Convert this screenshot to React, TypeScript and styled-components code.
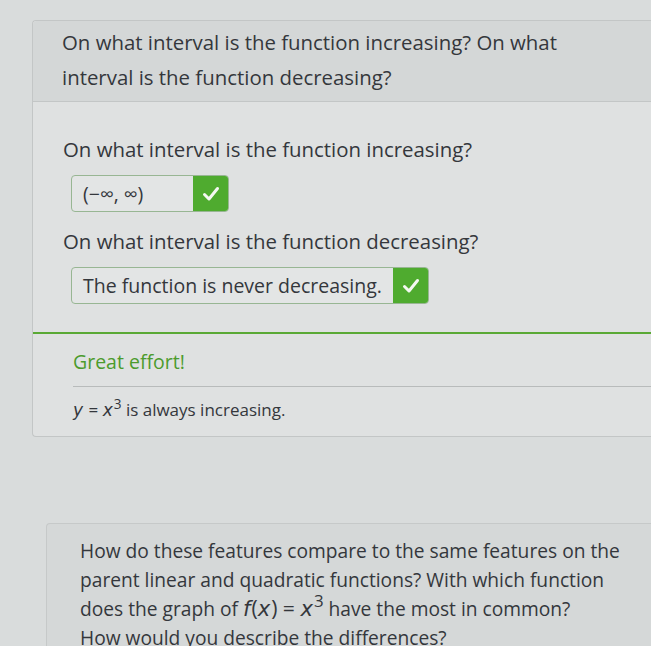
import React from 'react'
import styled, { createGlobalStyle } from 'styled-components'

const GlobalStyle = createGlobalStyle`
  html, body {
    margin: 0;
    padding: 0;
    background: #d9dcdc;
    font-family: 'Open Sans', 'Noto Sans', sans-serif;
    color: #34373c;
  }
`

const Page = styled.div`
  width: 651px;
  height: 646px;
  overflow: hidden;
  padding-top: 20px;
  box-sizing: border-box;
`

const Card = styled.div`
  margin-left: 32px;
  width: 680px;
  border: 1px solid #c3c6c6;
  border-right: none;
  border-radius: 4px 0 0 4px;
  background: #dfe1e1;
`

const Header = styled.div`
  background: #d4d7d7;
  border-bottom: 1px solid #c3c6c6;
  border-radius: 4px 0 0 0;
  padding: 4px 0 6px 29px;
  font-size: 20.4px;
  line-height: 35px;
`

const HeaderText = styled.div`
  width: 530px;
`

const Body = styled.div`
  padding: 32px 0 28px 30px;
`

const Question = styled.div<{ $gap?: number }>`
  font-size: 20.4px;
  line-height: 30px;
  margin-top: ${(p) => p.$gap ?? 0}px;
`

const AnswerBox = styled.div<{ $width: number }>`
  display: flex;
  width: ${(p) => p.$width}px;
  height: 37px;
  margin: 11px 0 0 8px;
  border: 1px solid #98b693;
  border-radius: 4px;
  overflow: hidden;
  background: #e3e5e5;
  box-sizing: border-box;
`

const AnswerText = styled.div`
  flex: 1;
  display: flex;
  align-items: center;
  padding-left: 11px;
  font-size: 19.5px;
  white-space: nowrap;
`

const CheckCell = styled.div`
  width: 35px;
  flex-shrink: 0;
  background: #4fab2f;
  display: flex;
  align-items: center;
  justify-content: center;
`

const Feedback = styled.div`
  border-top: 2px solid #5aa935;
  padding: 14px 58px 14px 40px;
`

const FeedbackTitle = styled.div`
  color: #4c9b2d;
  font-size: 19.5px;
  line-height: 28px;
`

const Divider = styled.hr`
  border: none;
  border-top: 1px solid #b8bbbb;
  margin: 10px 0 11px;
`

const Small = styled.div`
  font-size: 17px;
  line-height: 24px;
`

const Sup = styled.sup`
  font-size: 0.8em;
  line-height: 0;
  position: relative;
  top: -0.05em;
`

const MathExpr = styled.span<{ $scale?: number }>`
  font-size: ${(p) => p.$scale ?? 1}em;
  white-space: nowrap;
`

const MathVar = styled.i`
  font-family: 'DejaVu Sans', 'Open Sans', sans-serif;
  padding-right: 1px;
`

const Panel = styled.div`
  margin: 86px 0 0 46px;
  width: 640px;
  background: #d5d8d8;
  border: 1px solid #c6c9c9;
  border-right: none;
  border-radius: 4px 0 0 0;
  padding: 13px 0 0 33px;
  font-size: 19.2px;
  line-height: 28.5px;
  height: 200px;
`

const PanelText = styled.div`
  width: 552px;
`

const Check = () => (
  <svg width="18" height="16" viewBox="0 0 18 16">
    <path
      d="M2.5 8.5 L7 13 L15.5 2.5"
      fill="none"
      stroke="#f4f8f2"
      strokeWidth="3"
      strokeLinecap="round"
      strokeLinejoin="round"
    />
  </svg>
)

export default function App() {
  return (
    <>
      <GlobalStyle />
      <Page>
        <Card>
          <Header>
            <HeaderText>
              On what interval is the function increasing? On what interval is the function
              decreasing?
            </HeaderText>
          </Header>
          <Body>
            <Question>On what interval is the function increasing?</Question>
            <AnswerBox $width={158}>
              <AnswerText>(−∞, ∞)</AnswerText>
              <CheckCell>
                <Check />
              </CheckCell>
            </AnswerBox>
            <Question $gap={14}>On what interval is the function decreasing?</Question>
            <AnswerBox $width={358}>
              <AnswerText>The function is never decreasing.</AnswerText>
              <CheckCell>
                <Check />
              </CheckCell>
            </AnswerBox>
          </Body>
          <Feedback>
            <FeedbackTitle>Great effort!</FeedbackTitle>
            <Divider />
            <Small>
              <MathExpr>
                <MathVar>y</MathVar> = <MathVar>x</MathVar>
                <Sup>3</Sup>
              </MathExpr>{' '}
              is always increasing.
            </Small>
          </Feedback>
        </Card>
        <Panel>
          <PanelText>
            How do these features compare to the same features on the parent linear and
            quadratic functions? With which function does the graph of{' '}
            <MathExpr $scale={1.1}>
              <MathVar>f</MathVar>(<MathVar>x</MathVar>) = <MathVar>x</MathVar>
              <Sup>3</Sup>
            </MathExpr>{' '}
            have the most in common?
          </PanelText>
          <PanelText>How would you describe the differences?</PanelText>
        </Panel>
      </Page>
    </>
  )
}
